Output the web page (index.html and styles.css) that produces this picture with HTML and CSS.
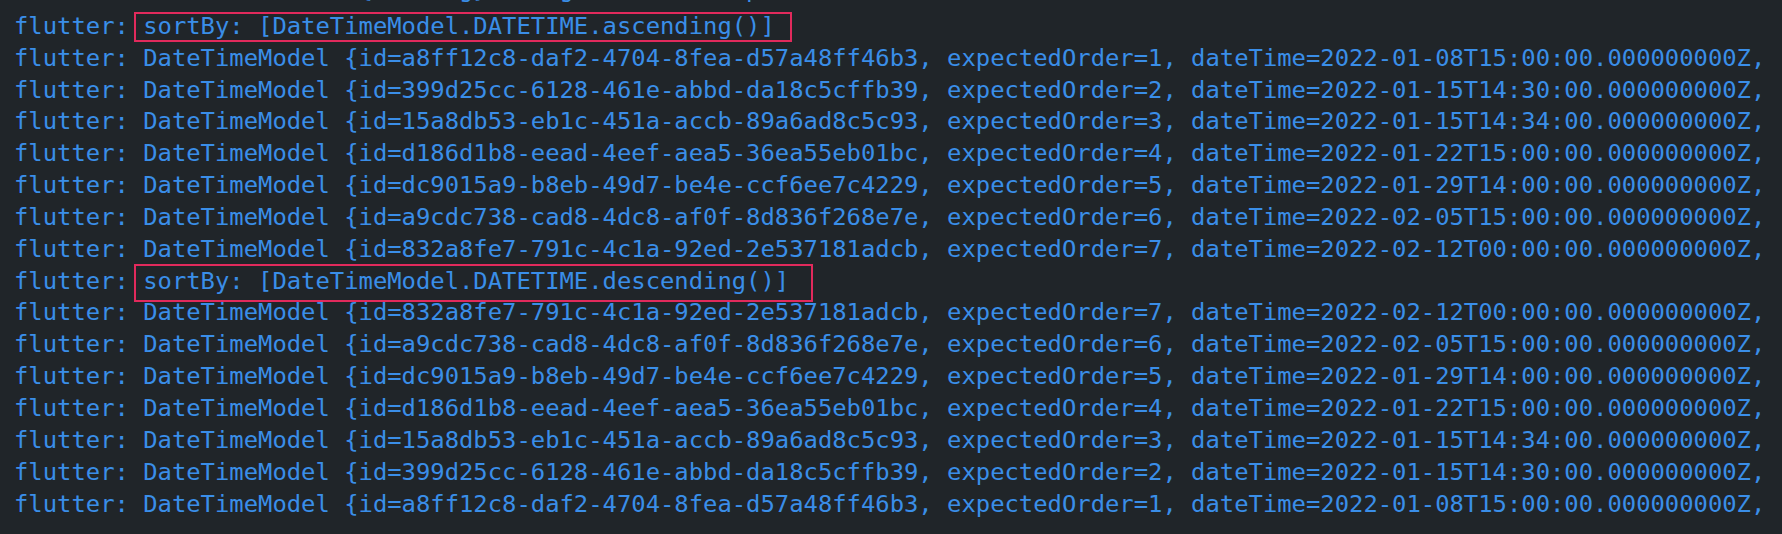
FILE: index.html
```html
<!DOCTYPE html>
<html lang="en">
<head>
<meta charset="utf-8">
<title>Debug Console</title>
<link rel="stylesheet" href="styles.css">
</head>
<body>
<div class="console">
<div class="line line-top">flutter: [DateTimeModel {sorting}] original list input, shuffled order before the sort tests start</div>
<div class="line">flutter: <span class="mark mark-a">sortBy: [DateTimeModel.DATETIME.ascending()]</span></div>
<div class="line">flutter: DateTimeModel {id=a8ff12c8-daf2-4704-8fea-d57a48ff46b3, expectedOrder=1, dateTime=2022-01-08T15:00:00.000000000Z,</div>
<div class="line">flutter: DateTimeModel {id=399d25cc-6128-461e-abbd-da18c5cffb39, expectedOrder=2, dateTime=2022-01-15T14:30:00.000000000Z,</div>
<div class="line">flutter: DateTimeModel {id=15a8db53-eb1c-451a-accb-89a6ad8c5c93, expectedOrder=3, dateTime=2022-01-15T14:34:00.000000000Z,</div>
<div class="line">flutter: DateTimeModel {id=d186d1b8-eead-4eef-aea5-36ea55eb01bc, expectedOrder=4, dateTime=2022-01-22T15:00:00.000000000Z,</div>
<div class="line">flutter: DateTimeModel {id=dc9015a9-b8eb-49d7-be4e-ccf6ee7c4229, expectedOrder=5, dateTime=2022-01-29T14:00:00.000000000Z,</div>
<div class="line">flutter: DateTimeModel {id=a9cdc738-cad8-4dc8-af0f-8d836f268e7e, expectedOrder=6, dateTime=2022-02-05T15:00:00.000000000Z,</div>
<div class="line">flutter: DateTimeModel {id=832a8fe7-791c-4c1a-92ed-2e537181adcb, expectedOrder=7, dateTime=2022-02-12T00:00:00.000000000Z,</div>
<div class="line">flutter: <span class="mark mark-d">sortBy: [DateTimeModel.DATETIME.descending()]</span></div>
<div class="line">flutter: DateTimeModel {id=832a8fe7-791c-4c1a-92ed-2e537181adcb, expectedOrder=7, dateTime=2022-02-12T00:00:00.000000000Z,</div>
<div class="line">flutter: DateTimeModel {id=a9cdc738-cad8-4dc8-af0f-8d836f268e7e, expectedOrder=6, dateTime=2022-02-05T15:00:00.000000000Z,</div>
<div class="line">flutter: DateTimeModel {id=dc9015a9-b8eb-49d7-be4e-ccf6ee7c4229, expectedOrder=5, dateTime=2022-01-29T14:00:00.000000000Z,</div>
<div class="line">flutter: DateTimeModel {id=d186d1b8-eead-4eef-aea5-36ea55eb01bc, expectedOrder=4, dateTime=2022-01-22T15:00:00.000000000Z,</div>
<div class="line">flutter: DateTimeModel {id=15a8db53-eb1c-451a-accb-89a6ad8c5c93, expectedOrder=3, dateTime=2022-01-15T14:34:00.000000000Z,</div>
<div class="line">flutter: DateTimeModel {id=399d25cc-6128-461e-abbd-da18c5cffb39, expectedOrder=2, dateTime=2022-01-15T14:30:00.000000000Z,</div>
<div class="line">flutter: DateTimeModel {id=a8ff12c8-daf2-4704-8fea-d57a48ff46b3, expectedOrder=1, dateTime=2022-01-08T15:00:00.000000000Z,</div>
</div>
</body>
</html>
```
FILE: styles.css
```css
html, body {
  margin: 0;
  padding: 0;
  background: #202529;
  width: 1782px;
  height: 534px;
  overflow: hidden;
}

.console {
  margin-top: -26px;
  padding-left: 14px;
  font-family: "DejaVu Sans Mono", "Liberation Mono", monospace;
  font-size: 23.85px;
  line-height: 31.85px;
  color: #3a8ee8;
}

.line {
  white-space: pre;
}

.line-top {
  margin-bottom: 5px;
}

.mark {
  position: relative;
}

.mark::after {
  content: "";
  position: absolute;
  left: -9px;
  border: 2px solid #e12a5c;
  pointer-events: none;
}

.mark-a::after {
  right: -17px;
  top: 0;
  bottom: -2px;
}

.mark-d::after {
  right: -24px;
  top: -3px;
  bottom: -7px;
}
```
